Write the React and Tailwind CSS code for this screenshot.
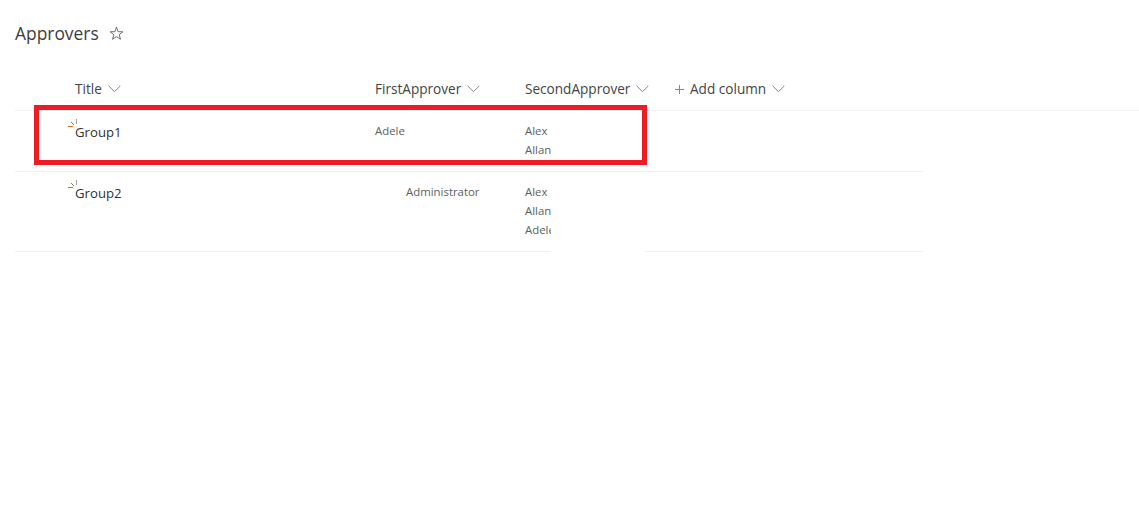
import React from 'react';

const Chevron = ({ className = '' }) => (
  <svg className={`shrink-0 ${className}`} width="13" height="8" viewBox="0 0 13 8" fill="none">
    <path d="M0.6 0.8L6.5 6.7L12.4 0.8" stroke="#8a8886" strokeWidth="1" />
  </svg>
);

const Glimmer = () => (
  <svg className="absolute left-[-7px] top-[-3px]" width="11" height="11" viewBox="0 0 11 11" fill="none">
    <path d="M0 7.5H5" stroke="#d8701e" strokeWidth="1" />
    <path d="M3 3L6 6" stroke="#9c7a50" strokeWidth="1" />
    <path d="M8.5 0V5" stroke="#a0a0a0" strokeWidth="1" />
  </svg>
);

const HeaderCell = ({ label, className }) => (
  <div className={`flex items-center gap-[6px] text-[13.6px] font-medium text-[#444] ${className}`}>
    <span>{label}</span>
    <Chevron />
  </div>
);

const Row = ({ title, first, firstClass = '', second, className }) => (
  <div className={`flex w-[908px] border-b border-[#f0f0f0] ${className}`}>
    <div className="w-[60px]" />
    <div className="w-[300px] pt-[11px] text-[13.2px] leading-[20px] text-[#323130]">
      <div className="relative">
        <Glimmer />
        {title}
      </div>
    </div>
    <div className={`w-[150px] pt-[12px] text-[11.4px] leading-[16px] text-[#605e5c] ${firstClass}`}>{first}</div>
    <div className="pt-[10px] text-[11.4px] leading-[19px] text-[#605e5c]">
      {second.map((name) => (
        <div key={name}>{name}</div>
      ))}
    </div>
  </div>
);

export default function App() {
  return (
    <div className="relative min-h-[512px] bg-white font-['Open_Sans','Noto_Sans',sans-serif] overflow-hidden">
      {/* Title */}
      <div className="flex items-center h-[67px] pl-[15px]">
        <h1 className="text-[17.4px] font-medium text-[#3d3d3d]">Approvers</h1>
        <svg className="ml-[10px]" width="15" height="15" viewBox="0 0 15 15" fill="none">
          <path
            d="M7.5 1.2L9.1 5.7L13.9 5.8L10.1 8.7L11.5 13.3L7.5 10.6L3.5 13.3L4.9 8.7L1.1 5.8L5.9 5.7Z"
            stroke="#6e6e6e"
            strokeWidth="1"
          />
        </svg>
      </div>

      {/* Header */}
      <div className="ml-[15px] flex items-center h-[44px] pt-[2px] border-b border-[#efefef]">
        <div className="w-[60px]" />
        <HeaderCell label="Title" className="w-[300px]" />
        <HeaderCell label="FirstApprover" className="w-[150px]" />
        <HeaderCell label="SecondApprover" className="w-[150px]" />
        <div className="flex items-center text-[13.6px] font-medium text-[#444]">
          <svg className="mr-[6px]" width="9" height="9" viewBox="0 0 9 9" fill="none">
            <path d="M4.5 0V9M0 4.5H9" stroke="#8a8886" strokeWidth="1" />
          </svg>
          <span>Add column</span>
          <Chevron className="ml-[6px]" />
        </div>
      </div>

      {/* Rows */}
      <div className="ml-[15px]">
        <Row className="h-[61px]" title="Group1" first="Adele" second={['Alex', 'Allan']} />
        <Row className="h-[80px]" title="Group2" first="Administrator" firstClass="pl-[31px]" second={['Alex', 'Allan', 'Adele']} />
      </div>

      {/* white patch from the edit and the red highlight on top of the shot */}
      <div className="absolute left-[551px] top-[172px] w-[94px] h-[84px] bg-white" />
      <div className="absolute left-[34px] top-[105px] w-[613px] h-[60px] border-[5px] border-[#ed1c24]" />
    </div>
  );
}
